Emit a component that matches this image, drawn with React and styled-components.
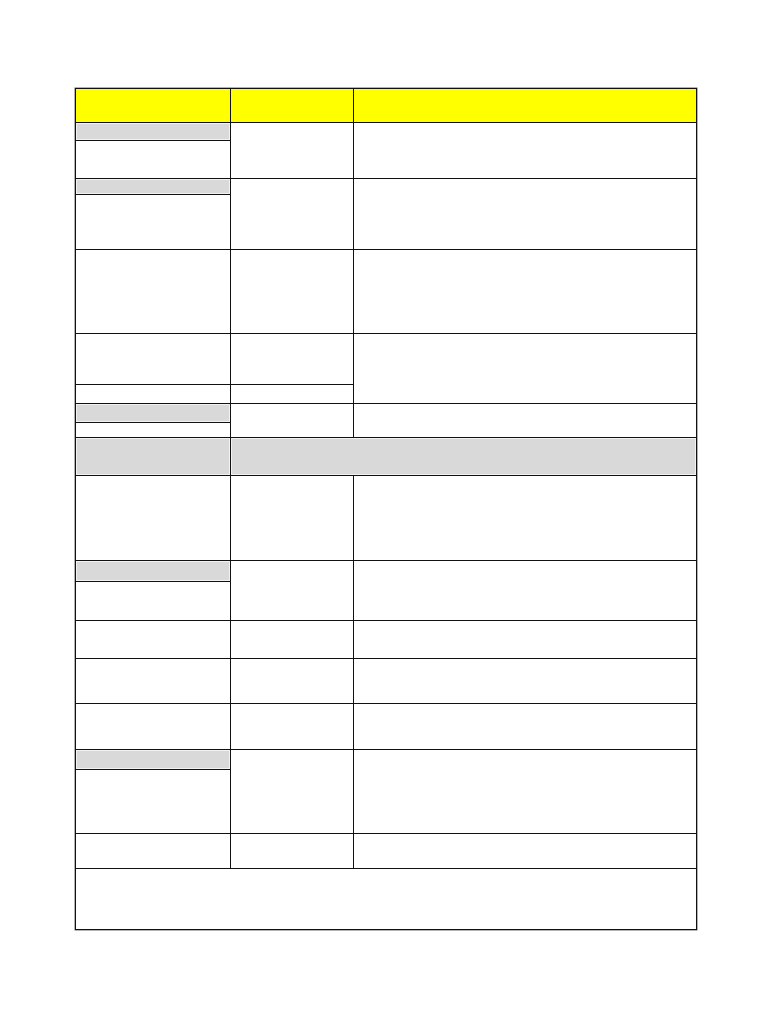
import React from 'react'
import styled, { createGlobalStyle } from 'styled-components'

const GlobalStyle = createGlobalStyle`
  html, body { margin: 0; padding: 0; background: #fff; }
  body { font-family: "Liberation Sans", Arial, sans-serif; }
`

// row heights between the 1px rule lines
const rowHeights = [33, 17, 37, 15, 54, 83, 50, 18, 18, 14, 37, 84, 20, 38, 37, 44, 45, 19, 63, 34, 60]

// [row, rowSpan, col, colSpan, fill]
const cells = [
  [1, 1, 1, 1, 'yellow'], [1, 1, 2, 1, 'yellow'], [1, 1, 3, 1, 'yellow'],
  [2, 1, 1, 1, 'gray'], [2, 2, 2, 1], [2, 2, 3, 1],
  [3, 1, 1, 1],
  [4, 1, 1, 1, 'gray'], [4, 2, 2, 1], [4, 2, 3, 1],
  [5, 1, 1, 1],
  [6, 1, 1, 1], [6, 1, 2, 1], [6, 1, 3, 1],
  [7, 1, 1, 1], [7, 1, 2, 1], [7, 2, 3, 1],
  [8, 1, 1, 1], [8, 1, 2, 1],
  [9, 1, 1, 1, 'gray'], [9, 2, 2, 1], [9, 2, 3, 1],
  [10, 1, 1, 1],
  [11, 1, 1, 1, 'gray'], [11, 1, 2, 2, 'gray'],
  [12, 1, 1, 1], [12, 1, 2, 1], [12, 1, 3, 1],
  [13, 1, 1, 1, 'gray'], [13, 2, 2, 1], [13, 2, 3, 1],
  [14, 1, 1, 1],
  [15, 1, 1, 1], [15, 1, 2, 1], [15, 1, 3, 1],
  [16, 1, 1, 1], [16, 1, 2, 1], [16, 1, 3, 1],
  [17, 1, 1, 1], [17, 1, 2, 1], [17, 1, 3, 1],
  [18, 1, 1, 1, 'gray'], [18, 2, 2, 1], [18, 2, 3, 1],
  [19, 1, 1, 1],
  [20, 1, 1, 1], [20, 1, 2, 1], [20, 1, 3, 1],
  [21, 1, 1, 3],
]

const fills = { yellow: '#ffff00', gray: '#d9d9d9' }

function App() {
  return (
    <Page>
      <GlobalStyle />
      <Sheet $rows={rowHeights}>
        {cells.map(([row, rowSpan, col, colSpan, fill], i) => (
          <Cell key={i} $row={row} $rowSpan={rowSpan} $col={col} $colSpan={colSpan} $fill={fill} />
        ))}
      </Sheet>
    </Page>
  )
}

const Page = styled.div`
  padding: 88px 0 95px 75px;
`

const Sheet = styled.div`
  display: grid;
  width: max-content;
  grid-template-columns: 154px 122px 342px;
  grid-template-rows: ${(p) => p.$rows.map((h) => `${h}px`).join(' ')};
  gap: 1px;
  padding: 1px;
  background: #111;
  box-shadow: 0 0 0 0.5px #666;
`

const Cell = styled.div`
  grid-row: ${(p) => p.$row} / span ${(p) => p.$rowSpan};
  grid-column: ${(p) => p.$col} / span ${(p) => p.$colSpan};
  background: ${(p) => fills[p.$fill] || '#fff'};
  ${(p) => p.$fill === 'gray' && 'box-shadow: inset 0 0 0 1px #f2f2f2;'}
`

export default App
